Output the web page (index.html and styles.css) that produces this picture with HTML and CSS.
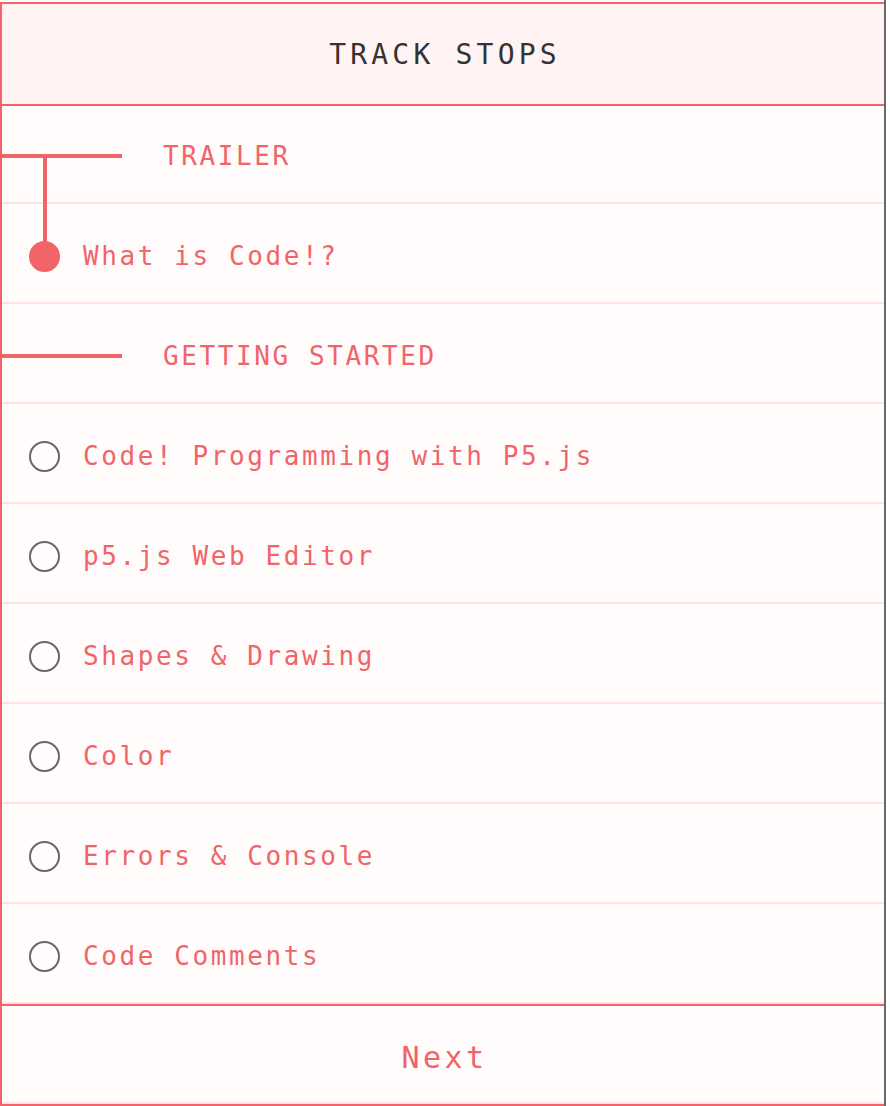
FILE: index.html
```html
<!DOCTYPE html>
<html lang="en">
<head>
<meta charset="utf-8">
<title>Track Stops</title>
<link rel="stylesheet" href="styles.css">
</head>
<body>
<div class="page">
  <div class="panel">
    <header class="panel-head">TRACK STOPS</header>
    <ul class="stops">
      <li class="row section first"><span class="branch"></span><span class="label">TRAILER</span></li>
      <li class="row item active"><span class="dot"></span><span class="label">What is Code!?</span></li>
      <li class="row section"><span class="branch"></span><span class="label">GETTING STARTED</span></li>
      <li class="row item"><span class="dot"></span><span class="label">Code! Programming with P5.js</span></li>
      <li class="row item"><span class="dot"></span><span class="label">p5.js Web Editor</span></li>
      <li class="row item"><span class="dot"></span><span class="label">Shapes &amp; Drawing</span></li>
      <li class="row item"><span class="dot"></span><span class="label">Color</span></li>
      <li class="row item"><span class="dot"></span><span class="label">Errors &amp; Console</span></li>
      <li class="row item"><span class="dot"></span><span class="label">Code Comments</span></li>
    </ul>
    <div class="panel-foot"><span class="next">Next</span></div>
  </div>
</div>
</body>
</html>
```
FILE: styles.css
```css
html, body {
  margin: 0;
  padding: 0;
  background: #ffffff;
}

.page {
  width: 886px;
  height: 1106px;
  padding-top: 2px;
  box-sizing: border-box;
  border-right: 2px solid #6a6a6a;
}

.panel {
  border-left: 2px solid #f0646a;
  border-top: 2px solid #f0646a;
  border-bottom: 2px solid #f0646a;
  background: #fffcfb;
  font-family: "DejaVu Sans Mono", "Liberation Mono", monospace;
}

.panel-head {
  height: 102px;
  box-sizing: border-box;
  display: flex;
  align-items: center;
  justify-content: center;
  background: #fff3f3;
  border-bottom: 2px solid #f0646a;
  color: #333333;
  font-size: 28px;
  letter-spacing: 4.2px;
  padding-left: 4px;
}

.stops {
  list-style: none;
  margin: 0;
  padding: 0;
}

.row {
  position: relative;
  height: 100px;
  box-sizing: border-box;
  padding-top: 6px;
  display: flex;
  align-items: center;
  border-bottom: 2px solid #fde3e3;
  color: #f0646a;
  font-size: 26px;
  letter-spacing: 2.6px;
}

.row.first {
  height: 98px;
  padding-top: 4px;
}

.section .branch {
  width: 120px;
  height: 4px;
  background: #f0646a;
  margin-right: 41px;
}

.item .dot {
  width: 27px;
  height: 27px;
  border: 2px solid #666666;
  border-radius: 50%;
  margin-left: 27px;
  margin-right: 23px;
  flex: none;
  box-sizing: content-box;
  position: relative;
}

.item.active .dot {
  background: #f0646a;
  border-color: #f0646a;
}

.item.active .dot::before {
  content: "";
  position: absolute;
  left: 11.5px;
  bottom: 15px;
  width: 4px;
  height: 100px;
  background: #f0646a;
}

.panel-foot {
  height: 100px;
  box-sizing: border-box;
  padding-top: 6px;
  display: flex;
  align-items: center;
  justify-content: center;
  border-top: 2px solid #f0646a;
  border-bottom: 2px solid #fde3e3;
}

.next {
  color: #f0646a;
  font-size: 30px;
  letter-spacing: 3.5px;
  padding-left: 3px;
}
```
